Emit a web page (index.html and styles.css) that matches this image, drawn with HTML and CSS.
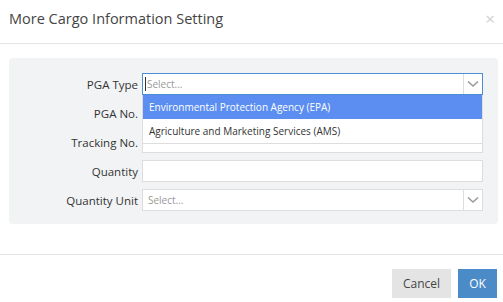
FILE: index.html
```html
<!DOCTYPE html>
<html lang="en">
<head>
    <meta charset="UTF-8">
    <title>More Cargo Information Setting</title>
    <link rel="stylesheet" href="styles.css">
</head>
<body>

<div class="modal">
    <div class="modal-header">
        <h4 class="modal-title">More Cargo Information Setting</h4>
        <span class="close">&times;</span>
    </div>

    <div class="modal-body">
        <div class="panel">
            <div class="row">
                <label>PGA Type</label>
                <div class="select open">
                    <span class="caret-line"></span>
                    <span class="placeholder">Select...</span>
                    <span class="arrow">
                        <svg width="12" height="8" viewBox="0 0 12 8"><path d="M1 1.5 L6 6 L11 1.5" fill="none" stroke="#999" stroke-width="1.6"/></svg>
                    </span>
                    <ul class="dropdown">
                        <li class="active">Environmental Protection Agency (EPA)</li>
                        <li>Agriculture and Marketing Services (AMS)</li>
                    </ul>
                </div>
            </div>
            <div class="row">
                <label>PGA No.</label>
                <div class="input"></div>
            </div>
            <div class="row">
                <label>Tracking No.</label>
                <div class="input"></div>
            </div>
            <div class="row">
                <label>Quantity</label>
                <div class="input"></div>
            </div>
            <div class="row">
                <label>Quantity Unit</label>
                <div class="select">
                    <span class="placeholder">Select...</span>
                    <span class="arrow">
                        <svg width="12" height="8" viewBox="0 0 12 8"><path d="M1 1.5 L6 6 L11 1.5" fill="none" stroke="#999" stroke-width="1.6"/></svg>
                    </span>
                </div>
            </div>
        </div>
    </div>

    <div class="modal-footer">
        <button class="btn btn-cancel">Cancel</button>
        <button class="btn btn-ok">OK</button>
    </div>
</div>

</body>
</html>
```

FILE: styles.css
```css
body {
    margin: 0;
    background-color: #fff;
    font-family: "Open Sans", Arial, sans-serif;
    color: #333;
}

.modal-header {
    height: 44px;
    border-bottom: 1px solid #e5e5e5;
    display: flex;
    align-items: center;
    justify-content: space-between;
    padding: 0 8px 0 9px;
    box-sizing: border-box;
}

.modal-title {
    margin: 0;
    margin-top: -6px;
    font-size: 14.5px;
    font-weight: normal;
    color: #444;
}

.close {
    color: #d0d0d0;
    font-size: 17px;
    margin-top: -7px;
}

.modal-body {
    padding: 14px 5px 30px 9px;
}

.panel {
    background-color: #f2f3f5;
    border-radius: 4px;
    padding: 15px 15px 13px 0;
    display: flex;
    flex-direction: column;
    gap: 7px;
}

.row {
    display: flex;
    align-items: center;
    height: 22px;
}

.row label {
    width: 129px;
    margin-right: 4px;
    text-align: right;
    font-size: 11.5px;
    color: #333;
}

.input,
.select {
    flex: 1;
    height: 22px;
    box-sizing: border-box;
    background-color: #fff;
    border: 1px solid #ddd;
}

.select {
    position: relative;
    display: flex;
    align-items: center;
}

.select.open {
    border-color: #4b8ed3;
}

.caret-line {
    width: 1px;
    height: 14px;
    background-color: #333;
    margin-left: 2px;
}

.placeholder {
    flex: 1;
    font-size: 10px;
    color: #999;
    padding-left: 5px;
}

.open .placeholder {
    padding-left: 1px;
}

.arrow {
    width: 18px;
    height: 100%;
    border-left: 1px solid #ddd;
    display: flex;
    align-items: center;
    justify-content: center;
}

.dropdown {
    position: absolute;
    top: 21px;
    left: -1px;
    right: -1px;
    margin: 0;
    padding: 0;
    list-style: none;
    background-color: #fff;
    border: 1px solid #ddd;
    border-top: none;
    z-index: 5;
}

.dropdown li {
    height: 24px;
    line-height: 24px;
    padding-left: 6px;
    font-size: 10px;
    color: #333;
}

.dropdown li.active {
    background-color: #5b8ef0;
    color: #fff;
}

.modal-footer {
    border-top: 1px solid #e5e5e5;
    padding: 14px 6px 0 0;
    display: flex;
    justify-content: flex-end;
    gap: 7px;
}

.btn {
    height: 29px;
    border: none;
    font-family: "Open Sans", Arial, sans-serif;
    font-size: 12px;
    padding: 0;
    cursor: pointer;
}

.btn-cancel {
    width: 59px;
    background-color: #e4e4e4;
    color: #444;
}

.btn-ok {
    width: 39px;
    background-color: #4a8bc8;
    color: #fff;
}
```
